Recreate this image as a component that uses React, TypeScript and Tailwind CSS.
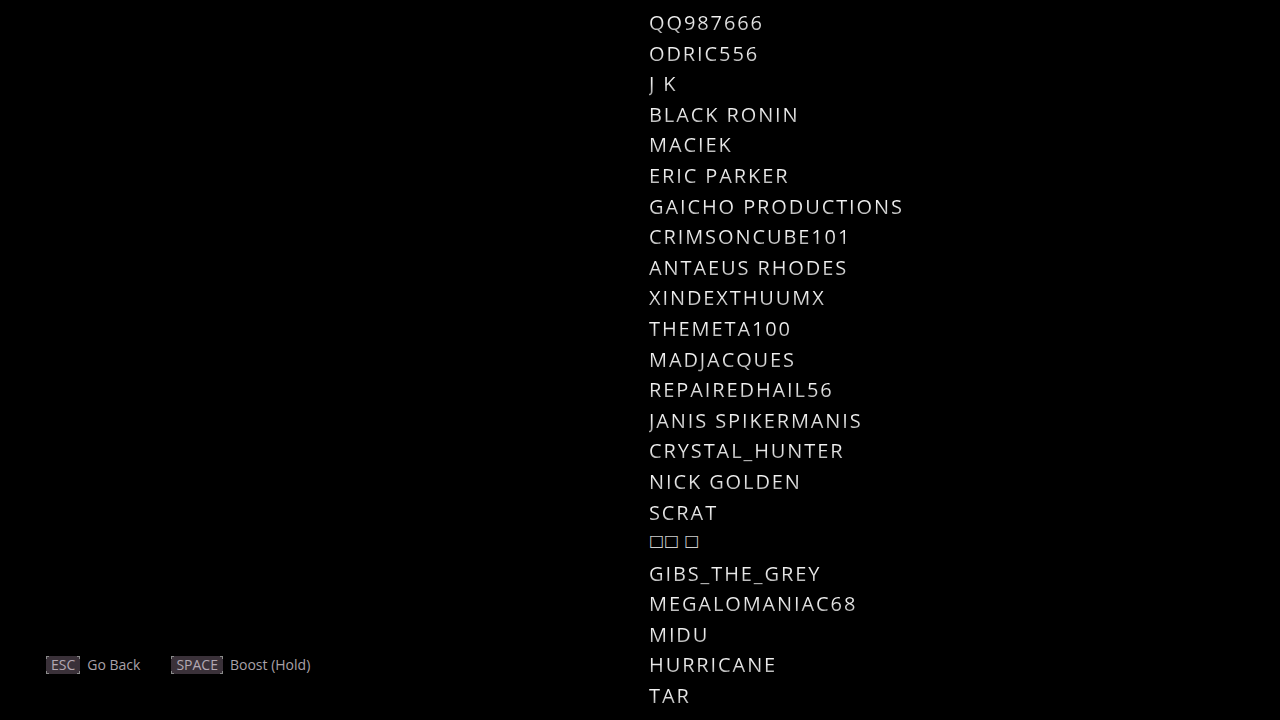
import React from "react";

const names = [
  "QQ987666",
  "ODRIC556",
  "J K",
  "BLACK RONIN",
  "MACIEK",
  "ERIC PARKER",
  "GAICHO PRODUCTIONS",
  "CRIMSONCUBE101",
  "ANTAEUS RHODES",
  "XINDEXTHUUMX",
  "THEMETA100",
  "MADJACQUES",
  "REPAIREDHAIL56",
  "JANIS SPIKERMANIS",
  "CRYSTAL_HUNTER",
  "NICK GOLDEN",
  "SCRAT",
  "__BOXES__",
  "GIBS_THE_GREY",
  "MEGALOMANIAC68",
  "MIDU",
  "HURRICANE",
  "TAR",
];

function Key({ label }: { label: string }) {
  return (
    <span className="relative inline-flex items-center h-[18px] px-[5px] bg-[#3a3139] text-[#b3a8b3] text-[14px] leading-none">
      <span className="absolute left-0 top-0 w-[3px] h-[3px] border-l border-t border-[#8a8a8a]" />
      <span className="absolute right-0 top-0 w-[3px] h-[3px] border-r border-t border-[#8a8a8a]" />
      <span className="absolute left-0 bottom-0 w-[3px] h-[3px] border-l border-b border-[#8a8a8a]" />
      <span className="absolute right-0 bottom-0 w-[3px] h-[3px] border-r border-b border-[#8a8a8a]" />
      {label}
    </span>
  );
}

export default function App() {
  return (
    <div
      className="w-[1280px] h-[720px] bg-black overflow-hidden flex"
      style={{ fontFamily: '"Open Sans", "Noto Sans", sans-serif' }}
    >
      <div className="w-[649px] shrink-0 flex flex-col justify-end pb-[45px] pl-[46px]">
        <div className="flex items-center gap-[31px] text-[14px] text-[#a9a1a9]">
          <div className="flex items-center gap-[7px]">
            <Key label="ESC" />
            <span>Go Back</span>
          </div>
          <div className="flex items-center gap-[7px]">
            <Key label="SPACE" />
            <span>Boost (Hold)</span>
          </div>
        </div>
      </div>
      <div className="flex flex-col pt-[8px]">
        {names.map((n, i) =>
          n === "__BOXES__" ? (
            <div key={i} className="h-[30.6px] flex items-center">
              <span
                className="text-[16px] tracking-[0px] text-[#cfcfcf] leading-none -mt-[4px]"
                style={{ fontFamily: '"DejaVu Sans", sans-serif' }}
              >
                □□ □
              </span>
            </div>
          ) : (
            <div key={i} className="h-[30.6px] leading-[30.6px]">
              <span
                className="text-[20px] tracking-[1.9px] font-normal bg-gradient-to-b from-[#ffffff] via-[#e8e8e8] to-[#9a9a9a] bg-clip-text text-transparent whitespace-pre"
              >
                {n}
              </span>
            </div>
          )
        )}
      </div>
    </div>
  );
}
